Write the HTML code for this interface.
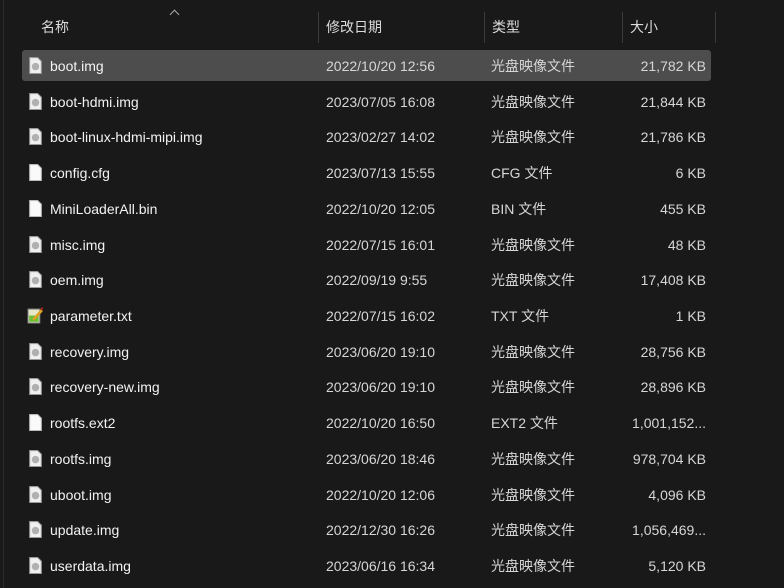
<!DOCTYPE html>
<html><head><meta charset="utf-8"><style>
html,body{margin:0;padding:0;background:#191919;width:784px;height:588px;overflow:hidden;font-family:"Liberation Sans","Noto Sans CJK SC",sans-serif;}
.lb{position:absolute;left:3px;top:0;width:1px;height:588px;background:#2a2a2a}
.h{position:absolute;top:19px;font-size:14px;line-height:16px;color:#dcdcdc}
.sep{position:absolute;top:12px;width:1px;height:31px;background:#3c3c3c}
.row{position:absolute;left:22px;width:689px;height:31px;font-size:14px;line-height:16px;color:#d6d6d6;border-radius:3px}
.row.sel{background:#4d4d4d}
.row span{position:absolute;top:8px;white-space:nowrap}
.n{left:28px;color:#f2f2f2}
.d{left:304px}
.t{left:469px}
.s{right:5px;text-align:right}
.ic{position:absolute;left:7px;top:7px;width:13px;height:17px}
</style></head><body>
<div class="lb"></div>
<div class="h" style="left:41px">名称</div>
<div style="position:absolute;left:171px;top:11px;width:6px;height:6px;border-left:1.5px solid #aaa;border-top:1.5px solid #aaa;transform:rotate(45deg)"></div>
<div class="sep" style="left:318px"></div>
<div class="h" style="left:326px">修改日期</div>
<div class="sep" style="left:484px"></div>
<div class="h" style="left:492px">类型</div>
<div class="sep" style="left:622px"></div>
<div class="h" style="left:630px">大小</div>
<div class="sep" style="left:715px"></div>
<div id="rows"></div>
<script>
var d=[["boot.img","2022/10/20 12:56","光盘映像文件","21,782 KB","i"],
["boot-hdmi.img","2023/07/05 16:08","光盘映像文件","21,844 KB","i"],
["boot-linux-hdmi-mipi.img","2023/02/27 14:02","光盘映像文件","21,786 KB","i"],
["config.cfg","2023/07/13 15:55","CFG 文件","6 KB","f"],
["MiniLoaderAll.bin","2022/10/20 12:05","BIN 文件","455 KB","f"],
["misc.img","2022/07/15 16:01","光盘映像文件","48 KB","i"],
["oem.img","2022/09/19 9:55","光盘映像文件","17,408 KB","i"],
["parameter.txt","2022/07/15 16:02","TXT 文件","1 KB","t"],
["recovery.img","2023/06/20 19:10","光盘映像文件","28,756 KB","i"],
["recovery-new.img","2023/06/20 19:10","光盘映像文件","28,896 KB","i"],
["rootfs.ext2","2022/10/20 16:50","EXT2 文件","1,001,152...","f"],
["rootfs.img","2023/06/20 18:46","光盘映像文件","978,704 KB","i"],
["uboot.img","2022/10/20 12:06","光盘映像文件","4,096 KB","i"],
["update.img","2022/12/30 16:26","光盘映像文件","1,056,469...","i"],
["userdata.img","2023/06/16 16:34","光盘映像文件","5,120 KB","i"]];
var h="";
d.forEach(function(r,i){
var top=Math.round(50+i*35.72);
var ic;
if(r[4]=="i")ic='<svg class="ic" viewBox="0 0 12 16"><path d="M0.5 0.5H8L11.5 4V15.5H0.5Z" fill="#f0f0f0" stroke="#999"/><circle cx="6" cy="9" r="3.5" fill="#b0b0b0"/></svg>';
else if(r[4]=="f")ic='<svg class="ic" viewBox="0 0 12 16"><path d="M0.5 0.5H8L11.5 4V15.5H0.5Z" fill="#fafafa" stroke="#bbb"/></svg>';
else ic='<svg class="ic" style="left:5px;width:17px" viewBox="0 0 16 16"><rect x="1" y="2" width="11" height="13" fill="#e8e8c8" stroke="#888"/><rect x="2" y="8" width="9" height="6" fill="#6bbf3a"/><path d="M6 12L14 3" stroke="#e0a020" stroke-width="2.5"/><path d="M13 2L15 1" stroke="#a02020" stroke-width="2"/></svg>';
h+='<div class="row'+(i==0?' sel':'')+'" style="top:'+top+'px">'+ic+'<span class="n">'+r[0]+'</span><span class="d">'+r[1]+'</span><span class="t">'+r[2]+'</span><span class="s">'+r[3]+'</span></div>';
});
document.getElementById("rows").innerHTML=h;
</script>
</body></html>
